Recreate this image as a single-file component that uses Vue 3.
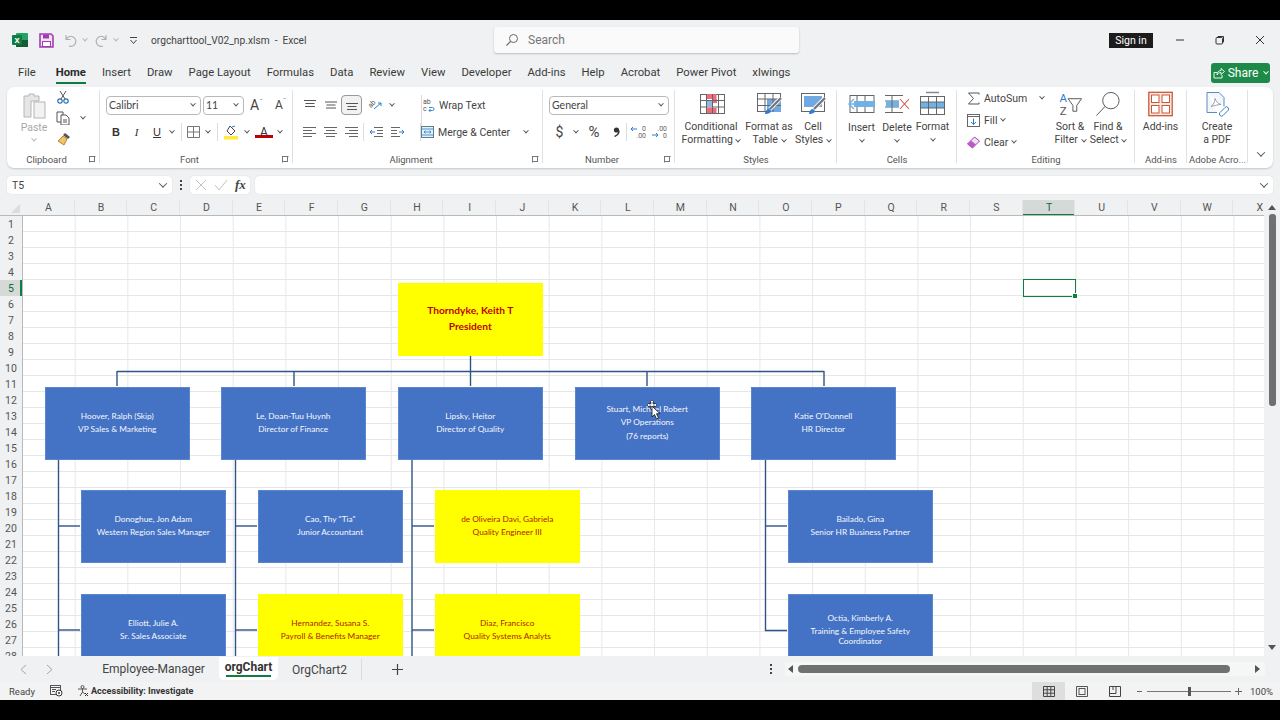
<script setup>
// origin of the chart canvas on the page
const ox = 22
const oy = 216

const columns = 'ABCDEFGHIJKLMNOPQRSTUVWX'.split('')
const rows = Array.from({ length: 28 }, (_, i) => i + 1)
const tabs = ['File', 'Home', 'Insert', 'Draw', 'Page Layout', 'Formulas', 'Data', 'Review', 'View', 'Developer', 'Add-ins', 'Help', 'Acrobat', 'Power Pivot', 'xlwings']

const nodes = [
  { x: 398, y: 283, tone: 'yellow', top: true, lines: ['Thorndyke, Keith T', 'President'] },
  { x: 45, y: 387, tone: 'blue', lines: ['Hoover, Ralph (Skip)', 'VP Sales & Marketing'] },
  { x: 221, y: 387, tone: 'blue', lines: ['Le, Doan-Tuu Huynh', 'Director of Finance'] },
  { x: 398, y: 387, tone: 'blue', lines: ['Lipsky, Heitor', 'Director of Quality'] },
  { x: 575, y: 387, tone: 'blue', lines: ['Stuart, Michael Robert', 'VP Operations', '(76 reports)'] },
  { x: 751, y: 387, tone: 'blue', lines: ["Katie O'Donnell", 'HR Director'] },
  { x: 81, y: 490, tone: 'blue', lines: ['Donoghue, Jon Adam', 'Western Region Sales Manager'] },
  { x: 258, y: 490, tone: 'blue', lines: ['Cao, Thy "Tia"', 'Junior Accountant'] },
  { x: 435, y: 490, tone: 'yellow', lines: ['de Oliveira Davi, Gabriela', 'Quality Engineer III'] },
  { x: 788, y: 490, tone: 'blue', lines: ['Bailado, Gina', 'Senior HR Business Partner'] },
  { x: 81, y: 594, tone: 'blue', lines: ['Elliott, Julie A.', 'Sr. Sales Associate'] },
  { x: 258, y: 594, tone: 'yellow', lines: ['Hernandez, Susana S.', 'Payroll & Benefits Manager'] },
  { x: 435, y: 594, tone: 'yellow', lines: ['Diaz, Francisco', 'Quality Systems Analyts'] },
  { x: 788, y: 594, tone: 'blue', tight: true, lines: ['Octia, Kimberly A.', 'Training & Employee Safety Coordinator'] },
]

// connector lines, in page coordinates
const connectors = [
  'M470.5 356V371', 'M117 371.5H824',
  'M117 371V386', 'M294 371V386', 'M470.5 371V386', 'M647 371V386', 'M824 371V386',
  'M58.5 460V656', 'M58.5 526H80', 'M58.5 630H80',
  'M235.5 460V656', 'M235.5 526H257', 'M235.5 630H257',
  'M412 460V656', 'M412 526H434', 'M412 630H434',
  'M765.5 460V630.5H787', 'M765.5 526H787',
]

function nodeStyle(n) {
  return { left: n.x - ox + 'px', top: n.y - oy + 'px' }
}
</script>

<template>
  <div class="screen">
    <div class="window">
      <!-- title bar -->
      <header class="titlebar">
        <div class="qat">
          <svg class="q-excel" width="16" height="16" viewBox="0 0 16 16"><rect x="4" y="1" width="12" height="14" rx="1" fill="#21a366"/><rect x="4" y="8" width="12" height="7" fill="#185c37"/><rect x="0" y="3" width="10" height="10" rx="1" fill="#107c41"/><text x="5" y="11" text-anchor="middle" font-size="8" font-weight="700" font-family="Roboto, sans-serif" fill="#fff">X</text></svg>
          <svg class="q-save" width="15" height="15" viewBox="0 0 15 15"><path d="M1 1h11l2 2v11H1z" fill="#f3e3f5" stroke="#a23bb3" stroke-width="1.6"/><rect x="4" y="1.5" width="6" height="4" fill="#a23bb3"/><rect x="3.5" y="8.5" width="8" height="5" fill="#fff" stroke="#a23bb3"/></svg>
          <svg class="q-undo" width="14" height="14" viewBox="0 0 14 14"><path d="M3 2v4.5h4.5M3.2 6.3A5 5 0 1 1 6 13" fill="none" stroke="#a9adb1" stroke-width="1.1"/></svg>
          <i class="cv cv-light q-c1"></i>
          <svg class="q-redo" width="14" height="14" viewBox="0 0 14 14"><path d="M11 2v4.5H6.5M10.8 6.3A5 5 0 1 0 8 13" fill="none" stroke="#a9adb1" stroke-width="1.1"/></svg>
          <i class="cv cv-light q-c2"></i>
          <svg class="q-more" width="9" height="9" viewBox="0 0 9 9"><path d="M1 1.5h7M1.5 4l3 3.5 3-3.5" fill="none" stroke="#444" stroke-width="1"/></svg>
          <span class="filename">orgcharttool_V02_np.xlsm&nbsp; - &nbsp;Excel</span>
        </div>
        <div class="search">
          <svg width="14" height="14" viewBox="0 0 14 14"><circle cx="8.5" cy="5.5" r="4" fill="none" stroke="#666" stroke-width="1"/><path d="M5.5 8.5L1.5 12.5" stroke="#666" stroke-width="1.1"/></svg>
          <span>Search</span>
        </div>
        <div class="win-controls">
          <span class="signin">Sign in</span>
          <span class="winbtn min"><svg width="10" height="10" viewBox="0 0 10 10"><path d="M1 5h8" stroke="#333"/></svg></span>
          <span class="winbtn"><svg width="10" height="10" viewBox="0 0 10 10"><rect x="1" y="2.5" width="6.5" height="6.5" rx="1" fill="none" stroke="#333"/><path d="M3 2.5V1.5h5.5V7H7.5" fill="none" stroke="#333"/></svg></span>
          <span class="winbtn"><svg width="10" height="10" viewBox="0 0 10 10"><path d="M1 1l8 8M9 1l-8 8" stroke="#333"/></svg></span>
        </div>
      </header>

      <!-- ribbon tabs -->
      <nav class="tabs">
        <span v-for="t in tabs" :key="t" class="tab" :class="{ active: t === 'Home' }">{{ t }}</span>
        <span class="share">
          <svg width="12" height="12" viewBox="0 0 12 12"><path d="M1 5.5h3M1 5.5V11h8V8M4 8c0-3 2-4.5 4-4.5V1.5L11.5 4.5 8 7.5V5.5C6 5.5 5 6.5 4 8z" fill="none" stroke="#fff" stroke-width=".9"/></svg>
          Share <i class="cv cv-white"></i>
        </span>
      </nav>

      <!-- ribbon -->
      <section class="ribbon">
        <div class="group g-clip">
          <div class="g-body clip-body">
            <div class="paste">
              <svg width="24" height="27" viewBox="0 0 24 27"><path d="M2 4h5V2h5v2h5v5H9v16H2z" fill="#e6e6e6" stroke="#b5b5b5"/><rect x="12" y="10" width="11" height="16" fill="#f2f2f2" stroke="#b5b5b5"/></svg>
              <span class="paste-label">Paste</span>
              <i class="cv cv-light"></i>
            </div>
            <div class="clip-tools">
              <svg width="12" height="14" viewBox="0 0 12 14"><path d="M3 1l5 8M9 1L4 9" stroke="#555" fill="none"/><circle cx="3" cy="11" r="2.2" fill="none" stroke="#2b6fb5" stroke-width="1.2"/><circle cx="9" cy="11" r="2.2" fill="none" stroke="#2b6fb5" stroke-width="1.2"/></svg>
              <span class="clip-copy">
                <svg width="14" height="14" viewBox="0 0 14 14"><path d="M1 1h6v10H1z" fill="none" stroke="#555"/><path d="M5 4h5l3 3v7H5z" fill="#fff" stroke="#555"/><path d="M7 9h4M7 11h4" stroke="#555"/></svg>
                <i class="cv"></i>
              </span>
              <svg width="14" height="14" viewBox="0 0 14 14"><path d="M8 1l5 4-2 2-5-4z" fill="#555"/><path d="M6 4l4 3-3 6-6-4z" fill="#f0c36d" stroke="#b8842f"/></svg>
            </div>
          </div>
          <div class="g-foot"><span>Clipboard</span><i class="launcher"></i></div>
        </div>

        <div class="group g-font">
          <div class="g-body stack">
            <div class="row">
              <div class="combo font-name"><span>Calibri</span><i class="cv"></i></div>
              <div class="combo font-size"><span>11</span><i class="cv"></i></div>
              <span class="grow-a">A<sup>ˆ</sup></span>
              <span class="grow-a small">A<sup>ˇ</sup></span>
            </div>
            <div class="row font-tools">
              <span class="fmt w20"><b>B</b></span>
              <span class="fmt w21 it">I</span>
              <span class="fmt w20 un">U</span>
              <span class="cell w9"><i class="cv"></i></span>
              <i class="sep after-u"></i>
              <span class="cell w17"><svg width="13" height="12" viewBox="0 0 13 12"><path d="M.5.5h12v11H.5zM6.5.5v11M.5 6h12" fill="none" stroke="#777"/></svg></span>
              <span class="cell w12"><i class="cv"></i></span>
              <i class="sep"></i>
              <span class="cell w20"><svg width="14" height="15" viewBox="0 0 14 15"><path d="M6 1l5 5-4 4-4-4z" fill="none" stroke="#444"/><path d="M8 2l3-1" stroke="#2b7cd3"/><rect y="11" width="14" height="3.5" fill="#ffe93b"/></svg></span>
              <span class="cell w12"><i class="cv"></i></span>
              <span class="cell color-a">A</span>
              <span class="cell w9"><i class="cv"></i></span>
            </div>
          </div>
          <div class="g-foot"><span>Font</span><i class="launcher"></i></div>
        </div>

        <div class="group g-align">
          <div class="g-body stack">
            <div class="row">
              <span class="cell w21"><svg width="12" height="10" viewBox="0 0 12 10"><path d="M0 .5h12M1.5 3.5h9M1 6.5h10" stroke="#555"/></svg></span>
              <span class="cell w21"><svg width="12" height="10" viewBox="0 0 12 10"><path d="M0 2h12M1.5 5h9M1 8h10" stroke="#555"/></svg></span>
              <span class="cell w21 pressed"><svg width="12" height="10" viewBox="0 0 12 10"><path d="M0 3.5h12M1.5 6.5h9M1 9.5h10" stroke="#555"/></svg></span>
              <span class="cell w24 orient">
                <svg width="16" height="14" viewBox="0 0 16 14"><text x="5" y="8" text-anchor="middle" font-size="7" fill="#555" font-family="Roboto, sans-serif" transform="rotate(-45 5 6)">ab</text><path d="M7 11l7-6M14 5h-3M14 5v3" stroke="#2b7cd3" fill="none"/></svg>
              </span>
              <span class="cell w9"><i class="cv"></i></span>
              <i class="sep first"></i>
              <span class="wide-btn">
                <svg width="12" height="14" viewBox="0 0 12 14"><text x="0" y="6" font-size="7" fill="#555" font-family="Roboto, sans-serif">ab</text><text x="0" y="13" font-size="7" fill="#555" font-family="Roboto, sans-serif">c</text><path d="M6 9.5h3.5a1.5 1.5 0 0 1 0 3H6M7.5 11L6 12.5 7.5 14" fill="none" stroke="#2b7cd3" stroke-width=".9"/></svg>
                <span>Wrap Text</span>
              </span>
            </div>
            <div class="row">
              <span class="cell w21"><svg width="13" height="10" viewBox="0 0 13 10"><path d="M0 .5h13M0 3.5h9M0 6.5h13M0 9.5h9" stroke="#666"/></svg></span>
              <span class="cell w21"><svg width="13" height="10" viewBox="0 0 13 10"><path d="M0 .5h13M2 3.5h9M0 6.5h13M2 9.5h9" stroke="#666"/></svg></span>
              <span class="cell w21"><svg width="13" height="10" viewBox="0 0 13 10"><path d="M0 .5h13M4 3.5h9M0 6.5h13M4 9.5h9" stroke="#666"/></svg></span>
              <i class="sep tight"></i>
              <span class="cell w21"><svg width="13" height="10" viewBox="0 0 13 10"><path d="M4 .5h9M7 3.5h6M7 6.5h6M4 9.5h9" stroke="#666"/><path d="M0 5h5M2 3l-2 2 2 2" fill="none" stroke="#2b7cd3"/></svg></span>
              <span class="cell w21"><svg width="13" height="10" viewBox="0 0 13 10"><path d="M0 .5h9M0 3.5h6M0 6.5h6M0 9.5h9" stroke="#666"/><path d="M8 5h5M11 3l2 2-2 2" fill="none" stroke="#2b7cd3"/></svg></span>
              <i class="sep second"></i>
              <span class="wide-btn merge">
                <svg width="13" height="12" viewBox="0 0 13 12"><rect x=".5" y=".5" width="12" height="11" fill="#e3f0f5" stroke="#5b7f8f"/><path d="M.5 3h12M.5 9h12M3 6h7M4.5 4.5L3 6l1.5 1.5M8.5 4.5L10 6 8.5 7.5" fill="none" stroke="#2b7cd3" stroke-width=".8"/></svg>
                <span>Merge &amp; Center</span>
                <i class="cv"></i>
              </span>
            </div>
          </div>
          <div class="g-foot"><span>Alignment</span><i class="launcher"></i></div>
        </div>

        <div class="group g-number">
          <div class="g-body stack">
            <div class="row">
              <div class="combo num-format"><span>General</span><i class="cv"></i></div>
            </div>
            <div class="row num-tools">
              <span class="cell w21 cur">$</span>
              <span class="cell w12"><i class="cv"></i></span>
              <span class="cell w24 pct">%</span>
              <span class="cell w21"><svg width="7" height="10" viewBox="0 0 7 10"><circle cx="3.5" cy="3" r="2.6" fill="#333"/><path d="M6 3.5C6 6.5 4 8.5 1.5 9.5" fill="none" stroke="#333" stroke-width="1.4"/></svg></span>
              <i class="sep"></i>
              <span class="cell w21"><svg width="15" height="14" viewBox="0 0 15 14"><path d="M0 4h6M2 2L0 4l2 2" fill="none" stroke="#2b7cd3"/><text x="15" y="6" text-anchor="end" font-size="7" fill="#666" font-family="Roboto, sans-serif">0</text><text x="15" y="13" text-anchor="end" font-size="7" fill="#666" font-family="Roboto, sans-serif">.00</text></svg></span>
              <span class="cell w21"><svg width="15" height="14" viewBox="0 0 15 14"><text x="15" y="6" text-anchor="end" font-size="7" fill="#666" font-family="Roboto, sans-serif">.00</text><path d="M0 10h6M4 8l2 2-2 2" fill="none" stroke="#2b7cd3"/><text x="15" y="13" text-anchor="end" font-size="7" fill="#666" font-family="Roboto, sans-serif">0</text></svg></span>
            </div>
          </div>
          <div class="g-foot"><span>Number</span><i class="launcher"></i></div>
        </div>

        <div class="group g-styles">
          <div class="g-body bigs">
            <div class="big w72">
              <svg class="nudge" width="25" height="20" viewBox="0 0 25 20"><rect x=".5" y=".5" width="24" height="19" fill="#fff" stroke="#666"/><path d="M6.5 0h10v5h-10zM6.5 14h10v5h-10z" fill="#ee6b7e"/><path d="M12 5h5v4h-5z" fill="#ee6b7e"/><rect x="7" y="7" width="5" height="5" fill="#8db8e8"/><path d="M0 6.5h25M0 13h25M6.5 0v20M12.5 0v20M18.5 0v20" stroke="#666" fill="none"/></svg>
              <span>Conditional</span>
              <span>Formatting <i class="cv"></i></span>
            </div>
            <div class="big w44">
              <svg width="25" height="22" viewBox="0 0 25 22"><rect x=".5" y=".5" width="23" height="18" fill="#fff" stroke="#666"/><rect x="10" y="6" width="14" height="13" fill="#6fa8e3"/><path d="M0 6h24M0 12.5h24M8 0v19M16 0v19" stroke="#666" fill="none"/><path d="M24 5L13 16" stroke="#fff" stroke-width="4"/><path d="M24 5L13 16" stroke="#777" stroke-width="2.4"/><path d="M8 21c0-3 2-5 4-5l2 2c0 2-3 3-6 3z" fill="#2b7cd3"/></svg>
              <span>Format as</span>
              <span>Table <i class="cv"></i></span>
            </div>
            <div class="big w44">
              <svg width="25" height="22" viewBox="0 0 25 22"><rect x=".5" y=".5" width="23" height="18" fill="#fff" stroke="#666"/><rect x="3" y="3" width="18" height="11" fill="#6fa8e3"/><path d="M24 5L13 16" stroke="#fff" stroke-width="4"/><path d="M24 5L13 16" stroke="#777" stroke-width="2.4"/><path d="M8 21c0-3 2-5 4-5l2 2c0 2-3 3-6 3z" fill="#2b7cd3"/></svg>
              <span>Cell</span>
              <span>Styles <i class="cv"></i></span>
            </div>
          </div>
          <div class="g-foot"><span>Styles</span></div>
        </div>

        <div class="group g-cells">
          <div class="g-body bigs">
            <div class="big w35 cellbtn">
              <svg width="27" height="18" viewBox="0 0 27 18"><rect x="2" y=".5" width="24" height="17" fill="#fff" stroke="#666"/><path d="M9 .5v17M17 .5v17" stroke="#666"/><rect x="6" y="6" width="21" height="6" fill="#6fb3e6"/><path d="M1 9h13M6 4L1 9l5 5" fill="none" stroke="#6fb3e6" stroke-width="1.4"/></svg>
              <span>Insert</span>
              <i class="cv cv-line"></i>
            </div>
            <div class="big w36 cellbtn">
              <svg width="25" height="18" viewBox="0 0 25 18"><path d="M0 .5h18M0 17.5h18M7 .5v17M0 6h14M0 12h14" fill="none" stroke="#666"/><rect x="1" y="6" width="13" height="6" fill="#6fb3e6"/><path d="M7 6v6" stroke="#666"/><path d="M15 4l9 10M24 4l-9 10" stroke="#d9534f" stroke-width="1.1"/></svg>
              <span>Delete</span>
              <i class="cv cv-line"></i>
            </div>
            <div class="big w35 cellbtn raised">
              <svg width="25" height="24" viewBox="0 0 25 24"><path d="M6 .5h13" stroke="#888" stroke-width="1.5"/><rect x=".5" y="4.5" width="24" height="18" fill="#fff" stroke="#666"/><rect x="1" y="10" width="23" height="6" fill="#6fb3e6"/><path d="M0 10h25M0 16h25M8.5 4v19M16.5 4v19" stroke="#666" fill="none"/></svg>
              <span>Format</span>
              <i class="cv cv-line"></i>
            </div>
          </div>
          <div class="g-foot"><span>Cells</span></div>
        </div>

        <div class="group g-edit">
          <div class="g-body bigs">
            <div class="edit-col">
              <div class="edit-row">
                <svg width="13" height="13" viewBox="0 0 13 13"><path d="M12 2.5V1H1.5l5 5.5-5 5.5H12v-1.5" fill="none" stroke="#555"/></svg>
                <span>AutoSum</span>
                <i class="cv auto-cv"></i>
              </div>
              <div class="edit-row">
                <svg width="13" height="13" viewBox="0 0 13 13"><rect x=".5" y=".5" width="12" height="12" fill="#fff" stroke="#666"/><path d="M0 2.5h13" stroke="#666"/><path d="M6.5 4.5v6M4 8l2.5 2.5L9 8" fill="none" stroke="#2b7cd3"/></svg>
                <span>Fill</span>
                <i class="cv"></i>
              </div>
              <div class="edit-row">
                <svg width="13" height="13" viewBox="0 0 13 13"><path d="M7.5 1L12.5 5 5.5 12 .5 8z" fill="#f0e4f3" stroke="#a23bb3"/><path d="M.5 8l3.5-3.5 5 4-3.5 3.5z" fill="#b95ac7"/></svg>
                <span>Clear</span>
                <i class="cv"></i>
              </div>
            </div>
            <div class="big w40">
              <svg width="25" height="27" viewBox="0 0 25 27"><text x="5" y="11" text-anchor="middle" font-size="12" fill="#2b7cd3" font-family="Roboto, sans-serif">A</text><text x="5" y="25" text-anchor="middle" font-size="12" fill="#555" font-family="Roboto, sans-serif">Z</text><path d="M10 8h14l-5 7v6l-4 0v-6z" fill="#fff" stroke="#555"/></svg>
              <span>Sort &amp;</span>
              <span>Filter <i class="cv"></i></span>
            </div>
            <div class="big w36">
              <svg width="26" height="27" viewBox="0 0 26 27"><circle cx="16" cy="10" r="8.5" fill="#fff" stroke="#555"/><path d="M10 16L1 25.5" stroke="#555"/></svg>
              <span>Find &amp;</span>
              <span>Select <i class="cv"></i></span>
            </div>
          </div>
          <div class="g-foot"><span>Editing</span></div>
        </div>

        <div class="group g-addins">
          <div class="g-body bigs">
            <div class="big w50">
              <svg width="25" height="25" viewBox="0 0 25 25"><rect x=".8" y=".8" width="23.4" height="23.4" fill="#fbe9e2" stroke="#c8583a" stroke-width="1.3"/><rect x="3.5" y="3.5" width="7.5" height="7.5" fill="#fff" stroke="#c8583a"/><rect x="14" y="3.5" width="7.5" height="7.5" fill="#fff" stroke="#c8583a"/><rect x="3.5" y="14" width="7.5" height="7.5" fill="#fff" stroke="#c8583a"/><rect x="14" y="14" width="7.5" height="7.5" fill="#fff" stroke="#c8583a"/></svg>
              <span>Add-ins</span>
            </div>
          </div>
          <div class="g-foot"><span>Add-ins</span></div>
        </div>

        <div class="group g-pdf">
          <div class="g-body bigs">
            <div class="big w60">
              <svg width="24" height="25" viewBox="0 0 24 25"><path d="M2 1h12l5 5v9M2 1v20h10" fill="#f3f7fc" stroke="#5d8ac4"/><path d="M6 15c3-2 4-6 4-8 1 3 3 5 6 6-3 0-6 1-10 2z" fill="none" stroke="#8a8a8a" stroke-width=".8"/><path d="M15 21l5-5a2 2 0 0 1 3 3l-5 5a2 2 0 0 1-3-3z" fill="none" stroke="#3f7fc4"/></svg>
              <span>Create</span>
              <span>a PDF</span>
            </div>
          </div>
          <div class="g-foot"><span>Adobe Acro...</span></div>
        </div>

        <div class="collapse"><i class="cv cv-big"></i></div>
      </section>

      <!-- formula bar -->
      <div class="formula">
        <div class="namebox"><span>T5</span><i class="cv cv-big"></i></div>
        <span class="dots"><i></i><i></i><i></i></span>
        <div class="fx-box">
          <svg width="12" height="12" viewBox="0 0 12 12"><path d="M1 1l10 10M11 1L1 11" stroke="#c4c4c4"/></svg>
          <svg width="14" height="12" viewBox="0 0 14 12"><path d="M1 6l4 5 8-10" fill="none" stroke="#c4c4c4"/></svg>
          <span class="fx">fx</span>
        </div>
        <div class="input"><i class="cv cv-big"></i></div>
      </div>

      <!-- worksheet -->
      <div class="work">
        <div class="work-left">
          <div class="col-head">
            <span class="corner"><i></i></span>
            <span v-for="c in columns" :key="c" class="col" :class="{ on: c === 'T' }">{{ c }}</span>
          </div>
          <div class="work-body">
            <div class="row-head">
              <span v-for="r in rows" :key="r" class="rownum" :class="{ on: r === 5 }">{{ r }}</span>
            </div>
            <div class="canvas">
              <svg class="wires" width="1242" height="440" :viewBox="`${ox} ${oy} 1242 440`">
                <path v-for="d in connectors" :key="d" :d="d" fill="none" stroke="#2f5488" stroke-width="1.4"/>
              </svg>
              <div v-for="n in nodes" :key="n.lines[0]" class="node" :class="[n.tone, { top: n.top, tight: n.tight }]" :style="nodeStyle(n)">
                <span v-for="l in n.lines" :key="l" class="line">{{ l }}</span>
              </div>
              <div class="selected"><i></i></div>
              <svg class="pointer" width="16" height="22" viewBox="0 0 16 22">
                <path d="M6 0l2 2H7v2h2V3l2 2-2 2V6H7v2h1L6 10 4 8h1V6H3v1L1 5l2-2v1h2V2H4z" fill="#fff" stroke="#111" stroke-width=".6"/>
                <path d="M6 6l0 11 2.5-2.5 2 4.5 2-1-2-4.3h3.5z" fill="#fff" stroke="#111" stroke-width=".8"/>
              </svg>
            </div>
          </div>
        </div>
        <div class="vscroll">
          <i class="tri-up"></i>
          <i class="v-thumb"></i>
          <i class="tri-down"></i>
        </div>
      </div>

      <!-- sheet tabs -->
      <div class="sheets">
        <div class="sheet-nav">
          <svg width="7" height="11" viewBox="0 0 7 11"><path d="M6 1L1 5.5 6 10" fill="none" stroke="#a5a5a5"/></svg>
          <svg width="7" height="11" viewBox="0 0 7 11"><path d="M1 1l5 4.5L1 10" fill="none" stroke="#a5a5a5"/></svg>
        </div>
        <span class="sheet s1">Employee-Manager</span>
        <span class="sheet active"><b>orgChart</b></span>
        <span class="sheet s3">OrgChart2</span>
        <span class="plus">
          <svg width="11" height="11" viewBox="0 0 11 11"><path d="M5.5 0v11M0 5.5h11" stroke="#444" stroke-width="1.2"/></svg>
        </span>
        <span class="sdots"><i></i><i></i><i></i></span>
        <div class="hscroll">
          <i class="tri-left"></i>
          <i class="h-thumb"></i>
          <i class="tri-right"></i>
        </div>
      </div>

      <!-- status bar -->
      <footer class="status">
        <span class="ready">Ready</span>
        <svg class="st-macro" width="13" height="12" viewBox="0 0 13 12"><rect x=".5" y=".5" width="10" height="9" fill="none" stroke="#555"/><path d="M.5 2.5h10M2 4.5h4M2 6.5h3" stroke="#555"/><circle cx="9" cy="8" r="3" fill="#fff" stroke="#333"/><circle cx="9" cy="8" r="1" fill="#333"/></svg>
        <svg class="st-access" width="12" height="12" viewBox="0 0 12 12"><circle cx="5.5" cy="2" r="1.5" fill="none" stroke="#555"/><path d="M1 4h9M5.5 4v3L3 11M5.5 7L8 9" fill="none" stroke="#555"/><path d="M8 8l3 3M11 8l-3 3" stroke="#333"/></svg>
        <b class="access">Accessibility: Investigate</b>
        <div class="views">
          <span class="view on"><svg width="12" height="11" viewBox="0 0 12 11"><path d="M.5.5h11v10H.5zM.5 3.8h11M.5 7.2h11M4.2.5v10M7.8.5v10" fill="none" stroke="#444"/></svg></span>
          <span class="view"><svg width="12" height="11" viewBox="0 0 12 11"><path d="M.5.5h11v10H.5z" fill="none" stroke="#555"/><rect x="3" y="2.5" width="6" height="6" fill="none" stroke="#555"/></svg></span>
          <span class="view"><svg width="12" height="11" viewBox="0 0 12 11"><path d="M.5.5h11v10H.5zM.5 7.5h6.5V.5M4 .5V4" fill="none" stroke="#444"/></svg></span>
        </div>
        <div class="zoomer">
          <i class="zm"></i>
          <span class="slider"><i></i></span>
          <svg width="7" height="7" viewBox="0 0 7 7"><path d="M3.5 0v7M0 3.5h7" stroke="#666"/></svg>
          <span class="pct-label">100%</span>
        </div>
      </footer>
    </div>
  </div>
</template>

<style>
html, body { margin: 0; background: #000; }
</style>

<style scoped>
.screen {
  width: 1280px;
  height: 720px;
  background: #000;
  padding: 20px 0;
  box-sizing: border-box;
  overflow: hidden;
  font-family: Roboto, "Noto Sans", sans-serif;
  color: #333;
}
.window {
  height: 680px;
  background: #eff1f2;
  display: flex;
  flex-direction: column;
}

/* chevrons */
.cv {
  display: inline-block;
  width: 3px;
  height: 3px;
  border-right: 1px solid #555;
  border-bottom: 1px solid #555;
  transform: rotate(45deg) translate(-1px, -1px);
  flex: none;
}
.cv-light { border-color: #b5b5b5; }
.cv-white { border-color: #fff; margin-left: 3px; }
.cv-big { width: 5px; height: 5px; }

/* title bar */
.titlebar {
  height: 40px;
  display: flex;
  align-items: center;
  position: relative;
}
.qat {
  width: 494px;
  display: flex;
  align-items: center;
  flex: none;
}
.q-excel { margin-left: 12px; }
.q-save { margin-left: 11px; }
.q-undo { margin-left: 9px; }
.q-c1 { margin-left: 6px; }
.q-redo { margin-left: 8px; }
.q-c2 { margin-left: 5px; }
.q-more { margin-left: 11px; }
.filename { margin-left: 13px; font-size: 10.2px; color: #444; white-space: nowrap; }
.search {
  width: 305px;
  height: 26px;
  background: #fafafa;
  border-radius: 3px;
  box-shadow: 0 1px 2px rgba(0, 0, 0, .22);
  display: flex;
  align-items: center;
  padding-left: 11px;
  box-sizing: border-box;
  gap: 9px;
  font-size: 12px;
  color: #777;
  flex: none;
}
.win-controls {
  display: flex;
  align-items: center;
  flex: 1;
  padding-left: 310px;
}
.signin {
  width: 44px;
  height: 15px;
  background: #1c1c1c;
  color: #fff;
  font-size: 10.5px;
  line-height: 15px;
  text-align: center;
  flex: none;
}
.winbtn {
  width: 40px;
  display: flex;
  justify-content: center;
  flex: none;
}
.winbtn.min { margin-left: 7px; }

/* tabs */
.tabs {
  height: 27px;
  display: flex;
  align-items: flex-start;
  gap: 16px;
  padding-left: 18px;
  box-sizing: border-box;
  font-size: 11.3px;
  color: #3b3b3b;
  position: relative;
}
.tab {
  height: 22px;
  line-height: 26px;
  white-space: nowrap;
}
.tab.active {
  margin-left: 4px;
  font-weight: 700;
  color: #2a2a2a;
  box-shadow: inset 0 -2px 0 #107c41;
  height: 24px;
}
.share {
  position: absolute;
  left: 1211px;
  top: 3px;
  width: 59px;
  height: 20px;
  background: #1d8a4a;
  color: #fff;
  border-radius: 3px;
  display: flex;
  align-items: center;
  justify-content: center;
  gap: 3px;
  font-size: 12px;
}

/* ribbon */
.ribbon {
  height: 81px;
  margin: 0 7px;
  background: #fff;
  border-radius: 7px;
  box-shadow: 0 1px 2px rgba(0, 0, 0, .18);
  display: flex;
  flex: none;
  font-size: 10.5px;
  color: #444;
}
.group {
  display: flex;
  flex-direction: column;
  flex: none;
  box-sizing: border-box;
  position: relative;
}
.group::after {
  content: "";
  position: absolute;
  right: 0;
  top: 3px;
  bottom: 5px;
  width: 1px;
  background: #e1e1e1;
}
.g-clip { width: 93px; }
.g-font { width: 193px; }
.g-align { width: 250px; }
.g-number { width: 132px; }
.g-styles { width: 162px; }
.g-cells { width: 120px; }
.g-edit { width: 178px; }
.g-addins { width: 52px; }
.g-pdf { width: 61px; }
.g-body { height: 64px; flex: none; box-sizing: border-box; }
.g-foot {
  display: flex;
  align-items: center;
  height: 17px;
  font-size: 9.5px;
  color: #555;
}
.g-foot span { flex: 1; text-align: center; white-space: nowrap; }
.launcher {
  width: 14px;
  height: 7px;
  position: relative;
  flex: none;
}
.launcher::before {
  content: "";
  position: absolute;
  left: 3px;
  top: 0;
  width: 5px;
  height: 5px;
  border: 1px solid #777;
  border-right-color: transparent;
  border-bottom-color: transparent;
  box-shadow: inset -2px -2px 0 -1px #777;
}
.collapse {
  flex: 1;
  display: flex;
  align-items: flex-end;
  justify-content: center;
  padding-bottom: 11px;
}

/* clipboard */
.clip-body { display: flex; padding: 5px 0 0 13px; }
.paste {
  width: 28px;
  display: flex;
  flex-direction: column;
  align-items: center;
  color: #a8a8a8;
}
.paste-label { margin-top: 2px; line-height: 14px; }
.paste .cv { margin-top: 3px; }
.clip-tools {
  display: flex;
  flex-direction: column;
  padding: 0 0 0 8px;
  margin-top: -2px;
  gap: 7px;
}
.clip-copy { display: flex; align-items: center; gap: 11px; }
.clip-tools > svg { margin-left: 1px; }

/* small tool rows */
.stack {
  display: flex;
  flex-direction: column;
  padding: 8px 0 0 6px;
  gap: 7px;
}
.row {
  display: flex;
  align-items: center;
  height: 20px;
  position: relative;
}
.combo {
  height: 19px;
  border: 1px solid #b9b9b9;
  border-radius: 4px;
  box-sizing: border-box;
  display: flex;
  align-items: center;
  justify-content: space-between;
  padding: 0 5px 0 2px;
  font-size: 10.5px;
  font-family: Lato, sans-serif;
  flex: none;
}
.font-name { width: 95px; margin-right: 2px; }
.font-size { width: 41px; }
.num-format { width: 120px; }
.grow-a {
  width: 23px;
  padding-left: 6px;
  box-sizing: border-box;
  font-size: 14px;
  color: #444;
  white-space: nowrap;
  flex: none;
}
.grow-a sup { font-size: 8px; color: #2b7cd3; line-height: 0; vertical-align: 5px; }
.grow-a.small { font-size: 12px; padding-left: 8px; }
.fmt, .cell {
  display: flex;
  align-items: center;
  justify-content: center;
  flex: none;
  height: 20px;
}
.w9 { width: 9px; }
.w12 { width: 12px; }
.w17 { width: 17px; }
.w20 { width: 20px; }
.w21 { width: 21px; }
.w24 { width: 24px; }
.fmt { font-family: "Liberation Sans", sans-serif; font-size: 11px; color: #333; }
.it { font-style: italic; font-family: "Liberation Serif", serif; }
.un { text-decoration: underline; }
.color-a {
  font-size: 12px;
  color: #333;
  line-height: 12px;
  box-shadow: inset 0 -3px 0 #fff, inset 0 -6px 0 #c00000;
  margin: 0 2px;
  width: 18px;
  height: 18px;
}
.sep { width: 1px; height: 18px; background: #dcdcdc; margin: 0 3px; flex: none; }
.sep.after-u { margin-left: 5px; }
.sep.first { margin: 0 6px 0 10px; height: 40px; position: absolute; left: 112px; top: 0; }
.sep.second { margin: 0 0 0 12px; }
.sep.tight { margin: 0 0 0 1px; }
.pressed {
  background: #f2f2f2;
  border: 1px solid #999;
  border-radius: 4px;
  box-sizing: border-box;
  height: 20px;
}
.orient { margin-left: 1px; }
.wide-btn {
  display: flex;
  align-items: center;
  gap: 4px;
  white-space: nowrap;
  font-size: 10.5px;
}
.row > .wide-btn { margin-left: 27px; }
.row > .merge { margin-left: 0; }
.row > .sep.tight + .cell { margin-left: 2px; }
.merge .cv { margin-left: 10px; }

/* number */
.cur { font-size: 14px; }
.pct { font-size: 15px; color: #444; }
.num-tools .sep { margin: 0 1px 0 -1px; }

/* large buttons */
.bigs { display: flex; align-items: flex-start; padding-top: 4px; }
.big {
  display: flex;
  flex-direction: column;
  align-items: center;
  flex: none;
  line-height: 13px;
  white-space: nowrap;
}
.big > svg { height: 26px; margin-bottom: 3px; }
.big > .nudge { margin-left: 3px; }
.big > span { height: 13px; }
.big .cv { margin-left: 1px; }
.w35 { width: 35px; }
.w36 { width: 36px; }
.w40 { width: 40px; }
.w44 { width: 44px; }
.w50 { width: 51px; }
.w60 { width: 60px; }
.w72 { width: 72px; }
.g-cells .bigs { padding-left: 7px; }
.cellbtn .cv-line { margin-top: 5px; margin-left: 0; }
.cellbtn > span { margin-top: 1px; }
.raised > span { margin-top: 0; }
.edit-col {
  width: 83px;
  margin-left: 10px;
  display: flex;
  flex-direction: column;
  gap: 8px;
  flex: none;
}
.edit-row { display: flex; align-items: center; gap: 4px; height: 14px; }
.auto-cv { margin-left: 9px; }

/* formula bar */
.formula {
  height: 18px;
  margin: 8px 7px 6px;
  display: flex;
  flex: none;
  font-size: 10.5px;
}
.namebox {
  width: 165px;
  background: #fff;
  border-radius: 4px;
  display: flex;
  align-items: center;
  justify-content: space-between;
  padding: 0 6px 0 5px;
  box-sizing: border-box;
  color: #444;
  box-shadow: 0 0 1px rgba(0, 0, 0, .2);
}
.dots, .sdots {
  display: flex;
  flex-direction: column;
  align-items: center;
  justify-content: center;
  gap: 2px;
  flex: none;
}
.dots { width: 18px; }
.dots i, .sdots i { width: 2px; height: 2px; background: #444; }
.fx-box {
  width: 60px;
  background: #fff;
  border-radius: 4px;
  display: flex;
  align-items: center;
  gap: 7px;
  padding-left: 5px;
  box-sizing: border-box;
  box-shadow: 0 0 1px rgba(0, 0, 0, .2);
}
.fx { font-family: "Liberation Serif", serif; font-style: italic; font-weight: 700; font-size: 13px; color: #444; }
.input {
  flex: 1;
  margin-left: 5px;
  background: #fff;
  border-radius: 4px;
  display: flex;
  align-items: center;
  justify-content: flex-end;
  padding-right: 6px;
  box-shadow: 0 0 1px rgba(0, 0, 0, .2);
}

/* worksheet */
.work {
  height: 456px;
  display: flex;
  flex: none;
}
.work-left {
  width: 1264px;
  display: flex;
  flex-direction: column;
  overflow: hidden;
}
.col-head {
  height: 16px;
  display: flex;
  flex: none;
  font-size: 10.5px;
  color: #555;
  border-bottom: 1px solid #b9b9b9;
  box-sizing: border-box;
}
.corner {
  width: 22px;
  flex: none;
  position: relative;
}
.corner i {
  position: absolute;
  right: 2px;
  bottom: 2px;
  width: 0;
  height: 0;
  border-left: 9px solid transparent;
  border-bottom: 9px solid #dcdcdc;
}
.col {
  width: 52.68px;
  flex: none;
  text-align: center;
  line-height: 16px;
  padding-left: 1px;
  border-right: 1px solid #e3e4e5;
  box-sizing: border-box;
}
.col.on {
  background: #d5d9d8;
  color: #0f6b3a;
  box-shadow: inset 0 -1px 0 #107c41;
}
.work-body { flex: 1; display: flex; min-height: 0; }
.row-head { width: 22px; flex: none; font-size: 10.5px; color: #555; }
.rownum {
  display: block;
  height: 16px;
  line-height: 17px;
  text-align: center;
  box-sizing: border-box;
}
.rownum.on {
  background: #d5d9d8;
  color: #0f6b3a;
  box-shadow: inset -2px 0 0 #107c41;
}
.canvas {
  flex: 1;
  position: relative;
  overflow: hidden;
  background-color: #fff;
  background-image:
    linear-gradient(to right, transparent 51.68px, #e6e7e8 51.68px),
    linear-gradient(to bottom, transparent 15px, #e6e7e8 15px);
  background-size: 52.68px 16px;
  border-left: 1px solid #b9b9b9;
  box-sizing: border-box;
}
.wires { position: absolute; left: -1px; top: 0; }
.node {
  position: absolute;
  margin-left: -1px;
  width: 144.5px;
  height: 73px;
  padding: 0 8px 1px;
  box-sizing: border-box;
  display: flex;
  flex-direction: column;
  align-items: center;
  justify-content: center;
  font-family: Lato, sans-serif;
  font-size: 8.3px;
  line-height: 13.5px;
  text-align: center;
}
.node.blue { background: #4472c4; color: #f6f8fc; border: 1px solid #5a86cf; }
.node.yellow { background: #ffff00; color: #b01a00; }
.node.top { font-size: 10.2px; font-weight: 700; line-height: 16.5px; color: #c00000; padding-bottom: 3px; }
.node.tight { padding-bottom: 3px; }
.node.tight .line:last-child { line-height: 10px; }
.selected {
  position: absolute;
  left: 1000px;
  top: 63px;
  width: 53px;
  height: 17.5px;
  border: 1.5px solid #107c41;
  box-sizing: border-box;
}
.selected i {
  position: absolute;
  right: -3px;
  bottom: -3px;
  width: 4px;
  height: 4px;
  background: #107c41;
  border: 1px solid #fff;
}
.pointer { position: absolute; left: 623px; top: 184px; }

/* scrollbars */
.vscroll {
  flex: 1;
  display: flex;
  flex-direction: column;
  align-items: center;
  position: relative;
}
.tri-up, .tri-down {
  width: 0;
  height: 0;
  border-left: 4px solid transparent;
  border-right: 4px solid transparent;
}
.tri-up { border-bottom: 5px solid #555; margin-top: 5px; }
.tri-down { border-top: 5px solid #555; margin-top: 239px; }
.v-thumb {
  width: 7px;
  height: 192px;
  margin-top: 4px;
  border-radius: 3px;
  background: #6f7070;
}
.sheets {
  height: 26px;
  display: flex;
  align-items: center;
  flex: none;
  font-size: 12px;
  color: #444;
  position: relative;
}
.sheet-nav {
  width: 88px;
  display: flex;
  gap: 19px;
  padding-left: 20px;
  box-sizing: border-box;
  flex: none;
}
.sheet { text-align: center; white-space: nowrap; flex: none; line-height: 25px; }
.s1 { width: 131px; }
.s3 { width: 84px; border-right: 1px solid #dcdcdc; line-height: 20px; padding-top: 1px; box-sizing: border-box; }
.sheet.active {
  width: 59px;
  height: 23px;
  line-height: 20px;
  margin-top: -2px;
  background: #fff;
  border-radius: 0 0 5px 5px;
  box-sizing: border-box;
  position: relative;
  color: #333;
}
.sheet.active::after {
  content: "";
  position: absolute;
  left: 7px;
  right: 7px;
  bottom: 3px;
  height: 2px;
  background: #107c41;
}
.plus { margin-left: 30px; display: flex; flex: none; }
.sdots { width: 6px; margin-left: 365px; }
.hscroll {
  width: 480px;
  height: 14px;
  margin-left: 11px;
  background: #f5f6f6;
  display: flex;
  align-items: center;
  flex: none;
}
.tri-left, .tri-right {
  width: 0;
  height: 0;
  border-top: 4px solid transparent;
  border-bottom: 4px solid transparent;
}
.tri-left { border-right: 5px solid #555; margin-left: 3px; }
.tri-right { border-left: 5px solid #555; margin-left: 25px; }
.h-thumb {
  width: 432px;
  height: 8px;
  margin-left: 5px;
  border-radius: 4px;
  background: #6f7070;
}

/* status bar */
.status {
  height: 18px;
  background: #f3f3f3;
  display: flex;
  align-items: center;
  flex: none;
  font-size: 9.5px;
  color: #444;
}
.ready { margin-left: 9px; width: 24px; }
.st-macro { margin-left: 17px; }
.st-access { margin-left: 14px; }
.access { margin-left: 2px; white-space: nowrap; color: #333; width: 102px; font-size: 9.1px; }
.views { margin-left: auto; display: flex; height: 18px; flex: none; }
.view { width: 33px; display: flex; align-items: center; justify-content: center; }
.view.on { background: #dedede; }
.zoomer {
  width: 149px;
  display: flex;
  align-items: center;
  flex: none;
  box-sizing: border-box;
  padding-left: 6px;
}
.zm { width: 5px; height: 1px; background: #666; }
.slider {
  width: 84px;
  height: 1px;
  margin: 0 4px 0 5px;
  background: #777;
  position: relative;
}
.slider i {
  position: absolute;
  left: 41px;
  top: -4px;
  width: 3px;
  height: 9px;
  background: #555;
}
.pct-label { margin-left: 8px; }
</style>
